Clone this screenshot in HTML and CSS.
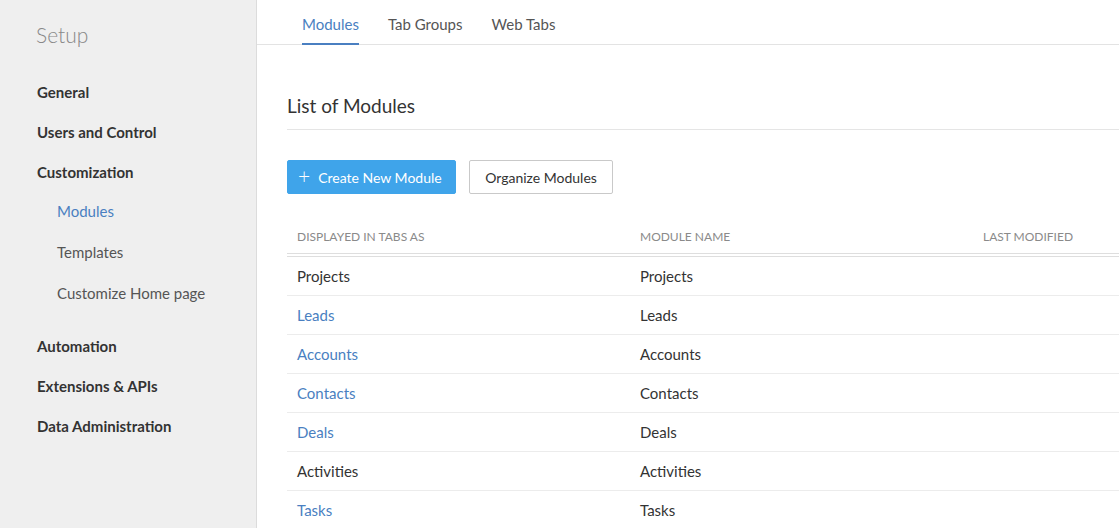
FILE: index.html
```html
<!DOCTYPE html>
<html>
<head>
<meta charset="utf-8">
<link rel="stylesheet" href="styles.css">
</head>
<body>
<div class="app">
  <aside class="sidebar">
    <div class="title">Setup</div>
    <nav class="menu">
      <div class="group">General</div>
      <div class="group">Users and Control</div>
      <div class="group">Customization</div>
      <div class="sub active">Modules</div>
      <div class="sub">Templates</div>
      <div class="sub">Customize Home page</div>
      <div class="group gap">Automation</div>
      <div class="group">Extensions &amp; APIs</div>
      <div class="group">Data Administration</div>
    </nav>
  </aside>
  <main class="main">
    <div class="tabs">
      <div class="tab active">Modules</div>
      <div class="tab">Tab Groups</div>
      <div class="tab">Web Tabs</div>
    </div>
    <div class="content">
      <h1 class="heading">List of Modules</h1>
      <div class="actions">
        <button class="btn primary"><span class="plus">+</span>Create New Module</button>
        <button class="btn secondary">Organize Modules</button>
      </div>
      <div class="table">
        <div class="row head">
          <div class="c1">DISPLAYED IN TABS AS</div>
          <div class="c2">MODULE NAME</div>
          <div class="c3">LAST MODIFIED</div>
        </div>
        <div class="row"><div class="c1">Projects</div><div class="c2">Projects</div><div class="c3"></div></div>
        <div class="row"><div class="c1 link">Leads</div><div class="c2">Leads</div><div class="c3"></div></div>
        <div class="row"><div class="c1 link">Accounts</div><div class="c2">Accounts</div><div class="c3"></div></div>
        <div class="row"><div class="c1 link">Contacts</div><div class="c2">Contacts</div><div class="c3"></div></div>
        <div class="row"><div class="c1 link">Deals</div><div class="c2">Deals</div><div class="c3"></div></div>
        <div class="row"><div class="c1">Activities</div><div class="c2">Activities</div><div class="c3"></div></div>
        <div class="row"><div class="c1 link">Tasks</div><div class="c2">Tasks</div><div class="c3"></div></div>
      </div>
    </div>
  </main>
</div>
</body>
</html>
```

FILE: styles.css
```css
* { box-sizing: border-box; }
html, body { margin: 0; padding: 0; height: 100%; overflow: hidden; }
body {
  font-family: Lato, "Open Sans", "Liberation Sans", sans-serif;
  color: #333;
  background: #fff;
}
.app { display: flex; height: 528px; }
.sidebar {
  width: 257px;
  flex: none;
  background: #efefef;
  border-right: 1px solid #dcdcdc;
  padding: 21px 0 0 37px;
}
.title {
  font-size: 21px;
  color: #888;
  font-weight: 300;
  line-height: 28px;
  margin-left: -1px;
}
.menu { display: flex; flex-direction: column; margin-top: 29px; }
.group {
  font-size: 15px;
  font-weight: 700;
  color: #333;
  height: 40px;
  line-height: 28px;
}
.group.gap { margin-top: 11px; }
.sub {
  font-size: 15px;
  color: #555;
  padding-left: 20px;
  height: 41px;
  line-height: 26px;
}
.sub.active { color: #4a7fc1; }
.main { flex: 1; display: flex; flex-direction: column; min-width: 0; }
.tabs {
  height: 45px;
  border-bottom: 1px solid #e3e3e3;
  display: flex;
  padding-left: 45px;
  gap: 29px;
}
.tab {
  font-size: 15px;
  color: #555;
  line-height: 48px;
  height: 45px;
}
.tab.active {
  color: #4a7fc1;
  border-bottom: 2px solid #4a7fc1;
}
.content { padding: 0 0 0 30px; }
.heading {
  margin: 48px 0 0 0;
  font-size: 19px;
  font-weight: 400;
  color: #333;
  line-height: 26px;
  padding-bottom: 10px;
  border-bottom: 1px solid #e5e5e5;
}
.actions { display: flex; gap: 13px; margin-top: 30px; }
.btn {
  height: 34px;
  font-family: inherit;
  font-size: 14px;
  border-radius: 2px;
  padding: 0;
  display: flex;
  align-items: center;
  white-space: nowrap;
}
.btn.primary {
  width: 169px;
  background: #3fa4ea;
  border: 1px solid #3fa4ea;
  color: #fff;
  padding-left: 10px;
}
.plus {
  font-size: 21px;
  font-weight: 300;
  margin-right: 8px;
  line-height: 20px;
  position: relative;
  top: -1px;
}
.btn.secondary {
  width: 144px;
  background: #fff;
  border: 1px solid #c9c9c9;
  color: #333;
  justify-content: center;
}
.table { margin-top: 26px; }
.row {
  display: flex;
  height: 39px;
  align-items: center;
  border-bottom: 1px solid #ececec;
  font-size: 15px;
  color: #333;
}
.row.head {
  height: 37px;
  border-bottom: 4px double #dedede;
  font-size: 12px;
  color: #8a8a8a;
  align-items: flex-start;
  padding-top: 9px;
}
.c1 { width: 353px; padding-left: 10px; flex: none; }
.c2 { width: 343px; flex: none; }
.c3 { flex: 1; }
.link { color: #4a7fc1; }
```
